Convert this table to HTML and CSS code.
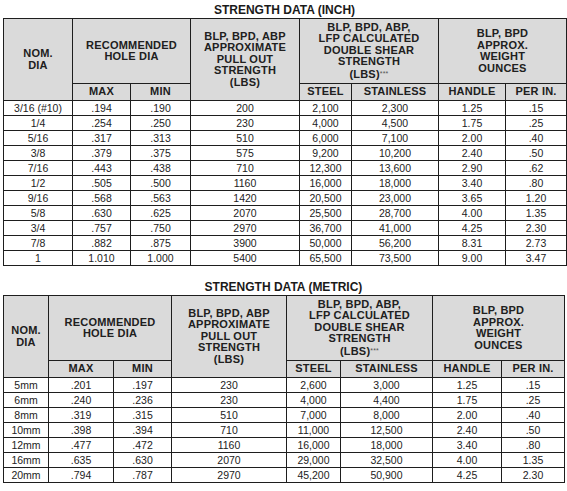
FILE: index.html
```html
<!DOCTYPE html>
<html lang="en">
<head>
<meta charset="utf-8">
<title>Strength Data</title>
<link rel="stylesheet" href="styles.css">
</head>
<body>
<div class="page">
  <section class="block block-inch">
    <h2 class="title">STRENGTH DATA (INCH)</h2>
    <table class="tbl tbl-inch">
      <colgroup>
        <col class="c-nom"><col class="c-max"><col class="c-min"><col class="c-pull">
        <col class="c-steel"><col class="c-stain"><col class="c-handle"><col class="c-per">
      </colgroup>
      <thead>
        <tr class="hrow1">
          <th rowspan="2">NOM.<br>DIA</th>
          <th colspan="2">RECOMMENDED<br>HOLE DIA</th>
          <th rowspan="2" class="pull">BLP, BPD, ABP<br>APPROXIMATE<br>PULL OUT<br>STRENGTH<br>(LBS)</th>
          <th colspan="2">BLP, BPD, ABP,<br>LFP CALCULATED<br>DOUBLE SHEAR<br>STRENGTH<br>(LBS)<span class="stars">***</span></th>
          <th colspan="2">BLP, BPD<br>APPROX.<br>WEIGHT<br>OUNCES</th>
        </tr>
        <tr class="hrow2">
          <th>MAX</th><th>MIN</th>
          <th>STEEL</th><th>STAINLESS</th>
          <th>HANDLE</th><th>PER IN.</th>
        </tr>
      </thead>
      <tbody>
        <tr><td>3/16 (#10)</td><td>.194</td><td>.190</td><td>200</td><td>2,100</td><td>2,300</td><td>1.25</td><td>.15</td></tr>
        <tr><td>1/4</td><td>.254</td><td>.250</td><td>230</td><td>4,000</td><td>4,500</td><td>1.75</td><td>.25</td></tr>
        <tr><td>5/16</td><td>.317</td><td>.313</td><td>510</td><td>6,000</td><td>7,100</td><td>2.00</td><td>.40</td></tr>
        <tr><td>3/8</td><td>.379</td><td>.375</td><td>575</td><td>9,200</td><td>10,200</td><td>2.40</td><td>.50</td></tr>
        <tr><td>7/16</td><td>.443</td><td>.438</td><td>710</td><td>12,300</td><td>13,600</td><td>2.90</td><td>.62</td></tr>
        <tr><td>1/2</td><td>.505</td><td>.500</td><td>1160</td><td>16,000</td><td>18,000</td><td>3.40</td><td>.80</td></tr>
        <tr><td>9/16</td><td>.568</td><td>.563</td><td>1420</td><td>20,500</td><td>23,000</td><td>3.65</td><td>1.20</td></tr>
        <tr><td>5/8</td><td>.630</td><td>.625</td><td>2070</td><td>25,500</td><td>28,700</td><td>4.00</td><td>1.35</td></tr>
        <tr><td>3/4</td><td>.757</td><td>.750</td><td>2970</td><td>36,700</td><td>41,000</td><td>4.25</td><td>2.30</td></tr>
        <tr><td>7/8</td><td>.882</td><td>.875</td><td>3900</td><td>50,000</td><td>56,200</td><td>8.31</td><td>2.73</td></tr>
        <tr><td>1</td><td>1.010</td><td>1.000</td><td>5400</td><td>65,500</td><td>73,500</td><td>9.00</td><td>3.47</td></tr>
      </tbody>
    </table>
  </section>

  <section class="block block-metric">
    <h2 class="title">STRENGTH DATA (METRIC)</h2>
    <table class="tbl tbl-metric">
      <colgroup>
        <col class="c-nom"><col class="c-max"><col class="c-min"><col class="c-pull">
        <col class="c-steel"><col class="c-stain"><col class="c-handle"><col class="c-per">
      </colgroup>
      <thead>
        <tr class="hrow1">
          <th rowspan="2">NOM.<br>DIA</th>
          <th colspan="2">RECOMMENDED<br>HOLE DIA</th>
          <th rowspan="2" class="pull">BLP, BPD, ABP<br>APPROXIMATE<br>PULL OUT<br>STRENGTH<br>(LBS)</th>
          <th colspan="2">BLP, BPD, ABP,<br>LFP CALCULATED<br>DOUBLE SHEAR<br>STRENGTH<br>(LBS)<span class="stars">***</span></th>
          <th colspan="2">BLP, BPD<br>APPROX.<br>WEIGHT<br>OUNCES</th>
        </tr>
        <tr class="hrow2">
          <th>MAX</th><th>MIN</th>
          <th>STEEL</th><th>STAINLESS</th>
          <th>HANDLE</th><th>PER IN.</th>
        </tr>
      </thead>
      <tbody>
        <tr><td>5mm</td><td>.201</td><td>.197</td><td>230</td><td>2,600</td><td>3,000</td><td>1.25</td><td>.15</td></tr>
        <tr><td>6mm</td><td>.240</td><td>.236</td><td>230</td><td>4,000</td><td>4,400</td><td>1.75</td><td>.25</td></tr>
        <tr><td>8mm</td><td>.319</td><td>.315</td><td>510</td><td>7,000</td><td>8,000</td><td>2.00</td><td>.40</td></tr>
        <tr><td>10mm</td><td>.398</td><td>.394</td><td>710</td><td>11,000</td><td>12,500</td><td>2.40</td><td>.50</td></tr>
        <tr><td>12mm</td><td>.477</td><td>.472</td><td>1160</td><td>16,000</td><td>18,000</td><td>3.40</td><td>.80</td></tr>
        <tr><td>16mm</td><td>.635</td><td>.630</td><td>2070</td><td>29,000</td><td>32,500</td><td>4.00</td><td>1.35</td></tr>
        <tr><td>20mm</td><td>.794</td><td>.787</td><td>2970</td><td>45,200</td><td>50,900</td><td>4.25</td><td>2.30</td></tr>
      </tbody>
    </table>
  </section>
</div>
</body>
</html>
```

FILE: styles.css
```css
html, body {
  margin: 0;
  padding: 0;
  background: #ffffff;
}

body {
  font-family: "Liberation Sans", Arial, sans-serif;
  color: #1c1c1c;
}

.page {
  padding: 3px 0 0 3px;
  display: flex;
  flex-direction: column;
  gap: 14px;
}

.block {
  display: flex;
  flex-direction: column;
}

.block-inch {
  width: 563px;
}

.block-metric {
  width: 561px;
}

.title {
  margin: 0;
  font-size: 12px;
  font-weight: bold;
  line-height: 15px;
  text-align: center;
  color: #1a1a1a;
}

.tbl {
  border-collapse: collapse;
  table-layout: fixed;
}

.tbl-inch {
  width: 563px;
}

.tbl-metric {
  width: 561px;
}

.tbl th,
.tbl td {
  border: 1px solid #1e1e1e;
  padding: 0;
  text-align: center;
  vertical-align: middle;
}

.tbl th {
  background: #dadada;
  font-size: 11px;
  font-weight: bold;
  line-height: 11.5px;
  letter-spacing: 0.2px;
  color: #202020;
}

.tbl td {
  font-size: 10.5px;
  line-height: 13px;
  height: 14px;
  color: #222222;
}

.hrow1 {
  height: 65px;
}

.hrow2 {
  height: 17px;
}

.stars {
  font-size: 7px;
  font-weight: normal;
  vertical-align: 2px;
  color: #555555;
}

/* column widths: inch table */
.tbl-inch .c-nom { width: 69px; }
.tbl-inch .c-max { width: 58px; }
.tbl-inch .c-min { width: 60px; }
.tbl-inch .c-pull { width: 109px; }
.tbl-inch .c-steel { width: 52px; }
.tbl-inch .c-stain { width: 87px; }
.tbl-inch .c-handle { width: 67px; }
.tbl-inch .c-per { width: 61px; }

/* column widths: metric table */
.tbl-metric .c-nom { width: 45px; }
.tbl-metric .c-max { width: 65px; }
.tbl-metric .c-min { width: 58px; }
.tbl-metric .c-pull { width: 115px; }
.tbl-metric .c-steel { width: 54px; }
.tbl-metric .c-stain { width: 92px; }
.tbl-metric .c-handle { width: 69px; }
.tbl-metric .c-per { width: 63px; }
```
